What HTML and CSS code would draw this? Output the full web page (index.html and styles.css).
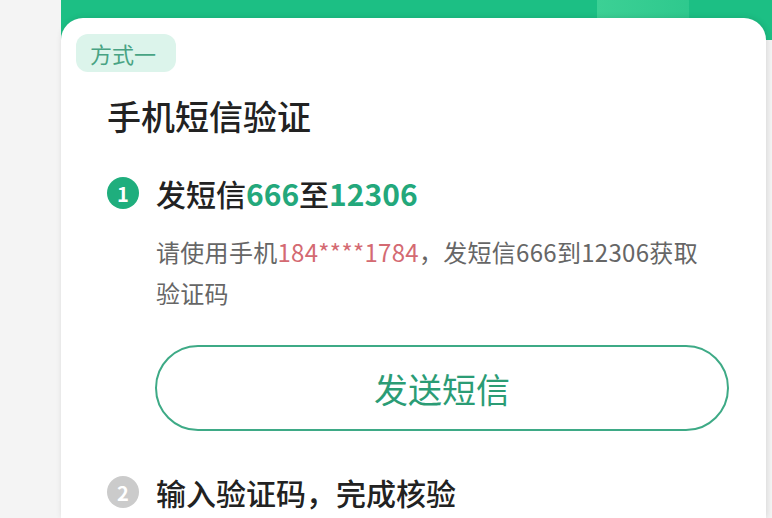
FILE: index.html
```html
<!DOCTYPE html>
<html lang="zh-CN">
<head>
    <meta charset="UTF-8">
    <meta name="viewport" content="width=device-width, initial-scale=1.0">
    <title>手机短信验证</title>
    <link rel="stylesheet" href="styles.css">
</head>
<body>
    <div class="screen">
        <div class="card">
            <div class="tag">方式一</div>

            <h2 class="title">手机短信验证</h2>

            <div class="step">
                <span class="step-num">1</span>
                <span class="step-text">发短信<b class="hl">666</b>至<b class="hl">12306</b></span>
            </div>
            <p class="desc">请使用手机<span class="phone">184****1784</span>，发短信666到12306获取验证码</p>

            <button class="send-button">发送短信</button>

            <div class="step">
                <span class="step-num off">2</span>
                <span class="step-text">输入验证码，完成核验</span>
            </div>
        </div>
    </div>
</body>
</html>
```

FILE: styles.css
```css
body {
    font-family: "Noto Sans CJK SC", "Noto Sans", sans-serif;
    margin: 0;
    padding: 0;
    background-color: #f4f4f4;
    height: 518px;
    overflow: hidden;
}

.screen {
    margin-left: 61px;
    height: 518px;
    padding-top: 18px;
    box-sizing: border-box;
    background:
        linear-gradient(to right, transparent 536px, rgba(120, 240, 180, 0.35) 536px, rgba(120, 240, 180, 0.2) 628px, transparent 628px) top / 100% 40px no-repeat,
        linear-gradient(#1cbf84, #1cbf84) top / 100% 40px no-repeat;
}

.card {
    background-color: white;
    margin-right: 6px;
    height: 100%;
    border-radius: 22px 22px 0 0;
    box-shadow: 1px 0 6px rgba(0, 0, 0, 0.12);
    padding: 16px 0 0 15px;
    box-sizing: border-box;
}

.tag {
    display: inline-block;
    height: 38px;
    line-height: 38px;
    padding: 0 20px 0 14px;
    background-color: #dcf4eb;
    color: #48a383;
    font-size: 22px;
    border-radius: 12px;
}

.title {
    margin: 24px 0 0 31px;
    font-size: 34px;
    line-height: 40px;
    font-weight: 500;
    color: #222;
}

.step {
    display: flex;
    align-items: center;
    margin: 37px 0 0 31px;
    height: 40px;
}

.step-num {
    width: 32px;
    height: 32px;
    border-radius: 50%;
    background-color: #1fae7d;
    color: white;
    font-size: 20px;
    font-weight: bold;
    display: flex;
    justify-content: center;
    align-items: center;
    margin-right: 17px;
}

.step-num.off {
    background-color: #cbcbcb;
}

.step-text {
    font-size: 30px;
    font-weight: 500;
    color: #222;
}

.step-text .hl {
    color: #23a87b;
    font-weight: bold;
}

.desc {
    margin: 18px 0 0 80px;
    width: 556px;
    font-size: 24px;
    letter-spacing: 0.3px;
    line-height: 41px;
    color: #666;
}

.phone {
    color: #d46a72;
}

.send-button {
    display: block;
    margin: 32px 0 0 79px;
    width: 574px;
    height: 86px;
    border: 2px solid #3eaa86;
    border-radius: 43px;
    background-color: white;
    color: #2b9c75;
    font-family: inherit;
    font-size: 34px;
    cursor: pointer;
}

.send-button + .step {
    margin-top: 41px;
}
```
